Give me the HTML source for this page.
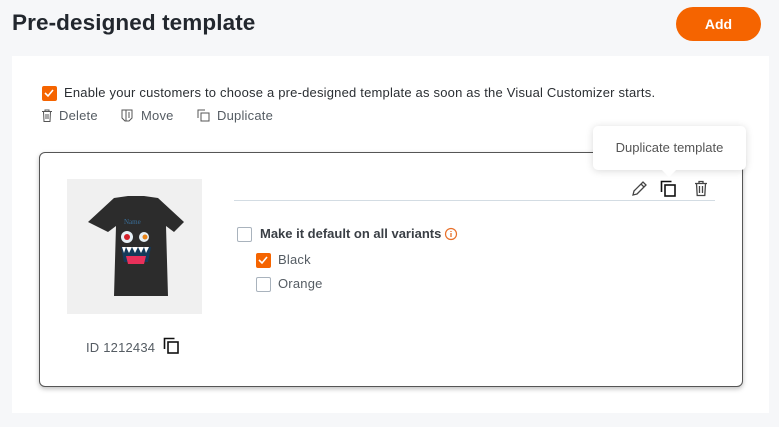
<!DOCTYPE html>
<html><head><style>
*{margin:0;padding:0;box-sizing:border-box}
body{width:779px;height:427px;background:#f6f7f9;font-family:"Liberation Sans",sans-serif;position:relative;overflow:hidden;color:#333}
.a{position:absolute}
h1{position:absolute;left:12px;top:10px;font-size:22.5px;font-weight:bold;color:#22272e;letter-spacing:0.1px}
.add{left:676px;top:7px;width:85px;height:34px;border-radius:17px;background:#f56400;color:#fff;font-weight:bold;font-size:14px;text-align:center;line-height:34px}
.panel{left:12px;top:56px;width:757px;height:357px;background:#fff}
.cb{width:15px;height:15px;border:1.5px solid #a9b3bd;border-radius:2px;background:#fff}
.cb.on{background:#f56400;border-color:#f56400}
.t{font-size:13px;color:#2b2f33;white-space:nowrap;letter-spacing:0.2px}
.g{font-size:13px;color:#555c63;white-space:nowrap;letter-spacing:0.2px}
.card{left:39px;top:152px;width:704px;height:235px;border:1px solid #555;border-radius:6px;background:#fff;box-shadow:0 2px 5px rgba(0,0,0,.25)}
.tip{left:593px;top:126px;width:153px;height:44px;background:#fff;border-radius:5px;box-shadow:0 1px 8px rgba(0,0,0,.15);font-size:13px;color:#555;text-align:center;line-height:44px}
.tip:after{content:"";position:absolute;left:71px;bottom:-5px;width:10px;height:10px;background:#fff;transform:rotate(45deg)}
</style></head><body>
<h1>Pre-designed template</h1>
<div class="a add">Add</div>
<div class="a panel"></div>
<div class="a cb on" style="left:42px;top:86px"><svg width="12" height="12" style="position:absolute;left:0;top:0"><path d="M2 6l3 3 5-6" stroke="#fff" stroke-width="1.6" fill="none"/></svg></div>
<div class="a t" style="left:64px;top:85px;letter-spacing:0.2px">Enable your customers to choose a pre-designed template as soon as the Visual Customizer starts.</div>
<svg class="a" style="left:41px;top:109px" width="12" height="13"><path d="M1 2.5h10M4 2.5V1h4v1.5M2.5 2.5l.5 10h6l.5-10M5 5v5M7 5v5" stroke="#555" fill="none"/></svg>
<div class="a g" style="left:59px;top:108px">Delete</div>
<svg class="a" style="left:121px;top:109px" width="12" height="13"><path d="M1 1h10v8l-3 3H4L1 9zM5 1v11M8 3v6" stroke="#555" fill="none"/></svg>
<div class="a g" style="left:141px;top:108px">Move</div>
<svg class="a" style="left:197px;top:109px" width="13" height="13"><path d="M1 9V1h7M4 4h8v8H4z" stroke="#555" fill="none"/></svg>
<div class="a g" style="left:217px;top:108px">Duplicate</div>
<div class="a card"></div>
<div class="a" style="left:67px;top:179px;width:135px;height:135px;background:#f0f0f0"></div>
<svg class="a" style="left:86px;top:196px" width="100" height="100"><path d="M28 2l14-2h16l14 2 26 24-10 10-8-6 2 70H28l2-70-8 6L2 26z" fill="#2c2c2c"/><text x="38" y="28" font-size="7" fill="#3a6f9a" font-family="Liberation Serif">Name</text><circle cx="41" cy="41" r="6" fill="#e6f0f6"/><circle cx="41" cy="41" r="3" fill="#d3202a"/><circle cx="58" cy="41" r="5" fill="#e6f0f6"/><circle cx="59" cy="41" r="2.5" fill="#e88419"/><path d="M35 51h30l-3 15H38z" fill="#143a5a"/><path d="M40 60h20l-2 8H42z" fill="#e8305a"/><path d="M36 51l2 6 2-6 3 6 3-6 3 6 3-6 3 6 3-6 2 6 3-6" fill="#fff"/></svg>
<div class="a g" style="left:86px;top:340px">ID 1212434</div>
<svg class="a" style="left:163px;top:337px" width="18" height="18"><path d="M1.5 12V1.5h10" stroke="#111" stroke-width="1.6" fill="none"/><rect x="5" y="5" width="10" height="11" stroke="#111" stroke-width="1.6" fill="none"/></svg>
<div class="a" style="left:234px;top:200px;width:481px;height:1px;background:#d3dce3"></div>
<svg class="a" style="left:630px;top:180px" width="18" height="18"><path d="M3 15l1-4 9-9 3 3-9 9zM11 4l3 3" stroke="#444" stroke-width="1.3" fill="none"/></svg>
<svg class="a" style="left:660px;top:180px" width="18" height="18"><path d="M1.5 12V1.5h10" stroke="#111" stroke-width="1.6" fill="none"/><rect x="5" y="5" width="10" height="11" stroke="#111" stroke-width="1.6" fill="none"/></svg>
<svg class="a" style="left:694px;top:180px" width="14" height="17"><path d="M1 3.5h12M5 3.5V1.5h4v2M2.5 3.5l.7 12h7.6l.7-12M5.5 6v7M8.5 6v7" stroke="#444" stroke-width="1.3" fill="none"/></svg>
<div class="a tip">Duplicate template</div>
<div class="a cb" style="left:237px;top:227px"></div>
<div class="a t" style="left:260px;top:226px;font-weight:bold;color:#3a3f45;letter-spacing:0">Make it default on all variants</div>
<svg class="a" style="left:444px;top:227px" width="14" height="14"><circle cx="7" cy="7" r="5.5" stroke="#e8702a" stroke-width="1.2" fill="none"/><path d="M7 6v4M7 4v1" stroke="#e8702a" stroke-width="1.3"/></svg>
<div class="a cb on" style="left:256px;top:253px"><svg width="12" height="12" style="position:absolute;left:0;top:0"><path d="M2 6l3 3 5-6" stroke="#fff" stroke-width="1.6" fill="none"/></svg></div>
<div class="a g" style="left:278px;top:252px">Black</div>
<div class="a cb" style="left:256px;top:277px"></div>
<div class="a g" style="left:278px;top:276px">Orange</div>
</body></html>
